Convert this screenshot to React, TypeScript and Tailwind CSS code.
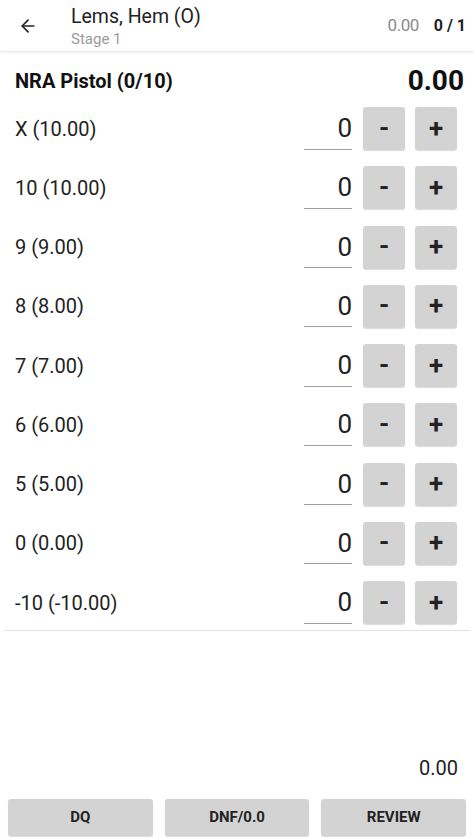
import { ArrowLeft } from "lucide-react";

const rows = [
  "X (10.00)",
  "10 (10.00)",
  "9 (9.00)",
  "8 (8.00)",
  "7 (7.00)",
  "6 (6.00)",
  "5 (5.00)",
  "0 (0.00)",
  "-10 (-10.00)",
];

function ScoreRow({ label }: { label: string }) {
  return (
    <div className="flex h-[59.25px] items-center pl-[15px] pr-[17px]">
      <div className="flex-1 text-[20px] text-[#222]">{label}</div>
      <div className="mr-[11px] mt-[2px] flex h-[40px] w-[48px] items-center justify-end border-b border-[#9e9e9e] pb-[2px] text-[26px] leading-none text-[#222]">
        0
      </div>
      <button className="flex h-[43px] w-[42px] items-center justify-center rounded-[3px] bg-[#d3d3d3] pb-[2px] text-[26px] font-bold leading-none text-[#222] shadow-[0_1px_1px_rgba(0,0,0,0.15)]">
        -
      </button>
      <button className="ml-[10px] flex h-[43px] w-[42px] items-center justify-center rounded-[3px] bg-[#d3d3d3] pb-[2px] text-[26px] font-bold leading-none text-[#222] shadow-[0_1px_1px_rgba(0,0,0,0.15)]">
        +
      </button>
    </div>
  );
}

export default function App() {
  return (
    <div className="flex h-[838px] w-[474px] flex-col overflow-hidden bg-white font-['Roboto',sans-serif]">
      <header className="flex h-[52px] shrink-0 items-center border-b border-[#ececec] shadow-[0_1px_2px_rgba(0,0,0,0.06)]">
        <div className="flex w-[71px] justify-center pr-[16px]">
          <ArrowLeft className="h-[20px] w-[20px] text-[#222]" strokeWidth={2} />
        </div>
        <div className="flex-1 pt-[3px]">
          <div className="text-[19.5px] leading-[22px] text-[#222]">Lems, Hem (O)</div>
          <div className="mt-[2px] text-[15px] leading-[18px] text-[#9a9a9a]">Stage 1</div>
        </div>
        <div className="mr-[15px] text-[17px] tracking-[-0.5px] text-[#8a8a8a]">0.00</div>
        <div className="mr-[8px] text-[16px] font-bold text-[#222]">0 / 1</div>
      </header>

      <div className="flex h-[56px] items-center justify-between pl-[15px] pr-[10px] pt-[1px]">
        <div className="text-[20px] font-bold text-[#111]">NRA Pistol (0/10)</div>
        <div className="text-[28px] font-bold leading-none text-[#111]">0.00</div>
      </div>

      <div className="-mt-[9px]">
        {rows.map((r) => (
          <ScoreRow key={r} label={r} />
        ))}
      </div>
      <div className="mx-[4px] mt-[-2px] border-b border-[#e2e2e2]" />

      <div className="flex-1" />

      <div className="pr-[16px] text-right text-[20px] leading-[24px] text-[#222]">0.00</div>
      <div className="flex gap-[12px] px-[8px] pb-[2px] pt-[19px]">
        {["DQ", "DNF/0.0", "REVIEW"].map((b) => (
          <button
            key={b}
            className="flex h-[37px] flex-1 items-center justify-center rounded-[3px] bg-[#d3d3d3] text-[15px] font-bold text-[#222] shadow-[0_1px_1px_rgba(0,0,0,0.15)]"
          >
            {b}
          </button>
        ))}
      </div>
    </div>
  );
}
